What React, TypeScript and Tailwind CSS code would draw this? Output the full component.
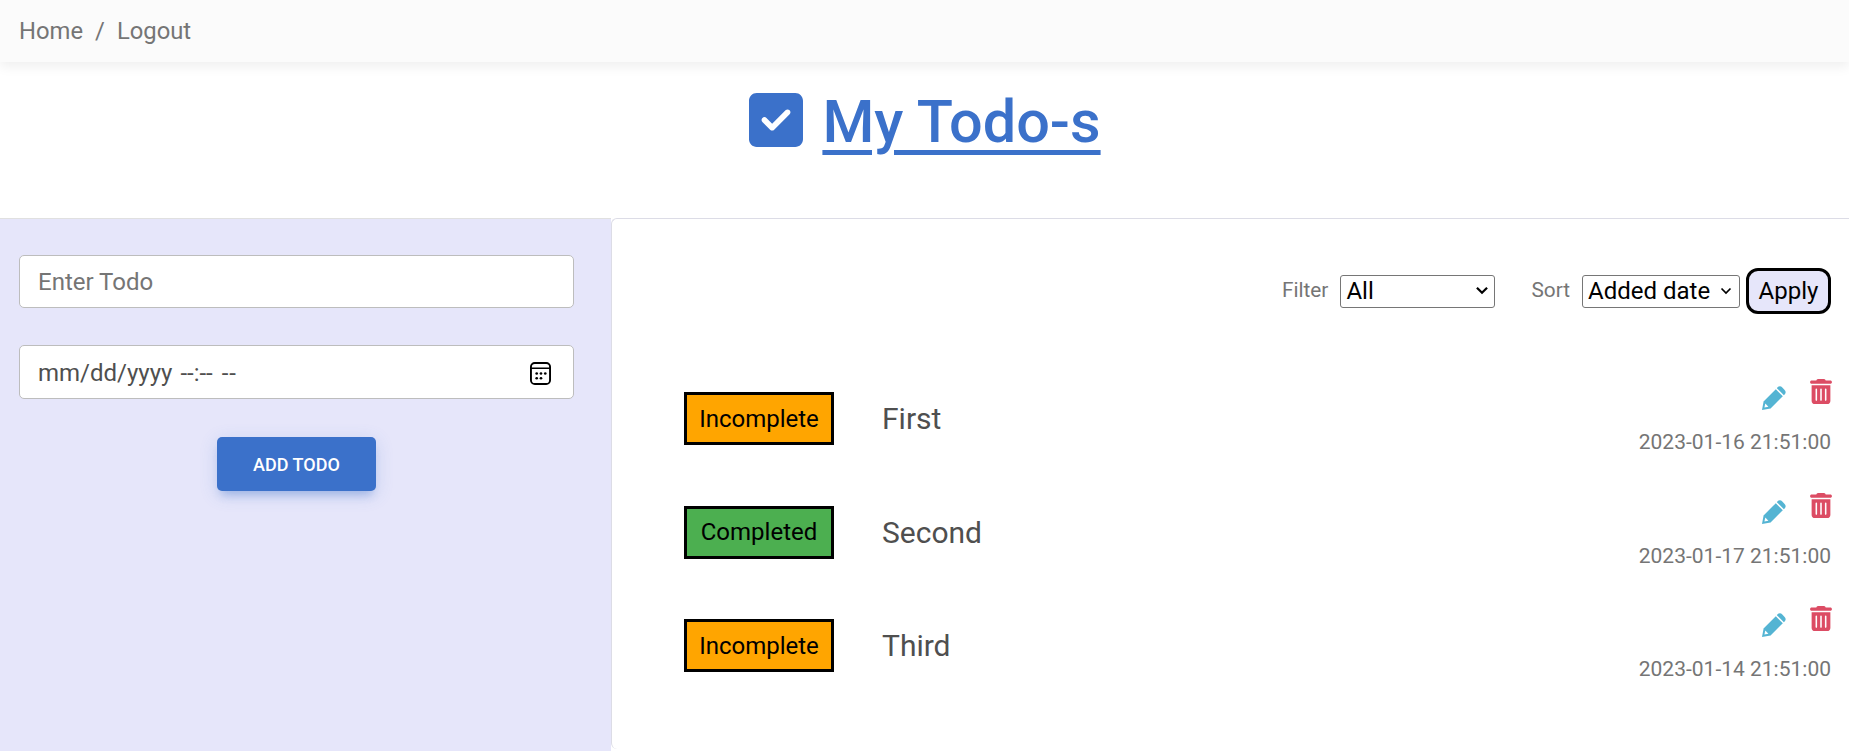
import { FaSquareCheck, FaTrashCan } from "react-icons/fa6";

const todos = [
  { status: "Incomplete", name: "First", date: "2023-01-16 21:51:00", color: "bg-[#ffa500]" },
  { status: "Completed", name: "Second", date: "2023-01-17 21:51:00", color: "bg-[#4caf50]" },
  { status: "Incomplete", name: "Third", date: "2023-01-14 21:51:00", color: "bg-[#ffa500]" },
];

function Chevron({ small }: { small?: boolean }) {
  return (
    <svg
      viewBox="0 0 12 8"
      className={
        small
          ? "pointer-events-none absolute right-[8px] top-[12px] h-[8px] w-[12px] text-black"
          : "pointer-events-none absolute right-[6px] top-[11px] h-[9px] w-[14px] text-black"
      }
    >
      <path d="M1.5 1.5 6 6l4.5-4.5" fill="none" stroke="currentColor" strokeWidth={small ? 1.7 : 2} />
    </svg>
  );
}

function Pencil() {
  return (
    <svg viewBox="0 0 24 24" className="h-[24px] w-[24px] text-[#54b4d3]" fill="currentColor">
      <path d="M1.6 15.4 13.8 3.2l7 7L8.6 22.4 0 24Z" />
      <path d="M15.3 1.6c1.7-1.7 3.5-1.7 5 0l2.1 2.1c1.7 1.6 1.7 3.3 0 5l-.5.5-7-7Z" />
      <path d="M2.4 21.6l.9-4 3.1 3.1Z" fill="#fff" />
    </svg>
  );
}

export default function App() {
  return (
    <div className="h-[751px] overflow-hidden bg-white font-['Roboto',sans-serif] text-[#4f4f4f]">
      <nav className="relative z-10 flex h-[62px] items-center bg-[#fbfbfb] px-[19px] pt-[1px] text-[23.8px] text-[#757575] shadow-[0_4px_12px_rgba(0,0,0,0.07)]">
        <span>Home</span>
        <span className="px-[12px]">/</span>
        <span>Logout</span>
      </nav>
      <header className="flex h-[156px] justify-center pt-[31px] text-[#3b71ca]">
        <div className="flex h-[54px] items-center gap-[19px] pl-[1px]">
          <FaSquareCheck className="h-[62px] w-[54px]" />
          <h1 className="mt-[4px] text-[59.4px] leading-[54px] font-medium underline decoration-[5px] underline-offset-[8px]">My Todo-s</h1>
        </div>
      </header>
      <main className="flex h-[533px]">
        <aside className="flex w-[611px] flex-col border-t border-[#e0e0e0] bg-[#e6e6fa] pl-[19px] pr-[37px] pt-[36px]">
          <input
            placeholder="Enter Todo"
            className="h-[53px] w-full rounded-[5px] border border-[#bdbdbd] bg-white px-[18px] text-[24px] text-[#4f4f4f] outline-none placeholder:text-[#757575]"
          />
          <div className="relative mt-[37px] flex h-[54px] w-full items-center rounded-[5px] border border-[#bdbdbd] bg-white px-[18px] pt-[1px] text-[24px] text-[#4f4f4f]">
            <span>mm/dd/yyyy</span>
            <span className="ml-[8px]">--:--</span>
            <span className="ml-[9px] tracking-[1px]">--</span>
            <svg viewBox="0 0 22 24" className="absolute right-[22px] top-[16px] h-[23px] w-[21px] text-black" fill="none" stroke="currentColor">
              <rect x="1" y="1" width="20" height="22" rx="4" strokeWidth="2" />
              <path d="M1 6.5h20" strokeWidth="1.6" />
              <g fill="currentColor" stroke="none">
                <circle cx="7" cy="12" r="1.4" />
                <circle cx="11.5" cy="12" r="1.4" />
                <circle cx="16" cy="12" r="1.4" />
                <circle cx="7" cy="17" r="1.4" />
                <circle cx="11.5" cy="17" r="1.4" />
              </g>
            </svg>
          </div>
          <button className="mx-auto mt-[38px] h-[54px] w-[159px] rounded-[5px] bg-[#3b71ca] text-[18px] font-medium text-white uppercase shadow-[0_8px_9px_-4px_rgba(59,113,202,0.3),0_4px_18px_0_rgba(59,113,202,0.2)]">
            Add Todo
          </button>
        </aside>
        <section className="h-[531px] flex-1 rounded-l-[6px] border-t border-l border-[#dcdce6] bg-white pr-[18px] pt-[49px]">
          <div className="flex h-[46px] items-center justify-end text-[#757575]">
            <label className="text-[20.8px]">Filter</label>
            <div className="relative ml-[12px] h-[33px] w-[155px]">
              <select className="h-full w-full appearance-none rounded-[3px] border border-[#767676] bg-white px-[5px] text-[24px] leading-[29px] text-black">
                <option>All</option>
              </select>
              <Chevron />
            </div>
            <label className="ml-[36px] text-[20.8px]">Sort</label>
            <div className="relative ml-[12px] h-[33px] w-[158px]">
              <select className="h-full w-full appearance-none rounded-[3px] border border-[#767676] bg-white px-[5px] text-[24px] leading-[29px] text-black">
                <option>Added date</option>
              </select>
              <Chevron small />
            </div>
            <button className="ml-[6px] h-[46px] w-[85px] rounded-[12px] border-[3px] border-black bg-[#e6e6fa] text-[24px] text-black">
              Apply
            </button>
          </div>
          <ul className="mt-[48px]">
            {todos.map((t) => (
              <li key={t.name} className="flex h-[113.5px] items-center pl-[72px]">
                <span className={`flex h-[53px] w-[150px] items-center justify-center border-[3px] border-black text-[24px] text-black ${t.color}`}>
                  {t.status}
                </span>
                <span className="ml-[48px] text-[30px]">{t.name}</span>
                <div className="ml-auto flex flex-col items-end">
                  <div className="-mr-[1px] flex items-end gap-[24px]">
                    <Pencil />
                    <FaTrashCan className="mb-[6px] h-[25px] w-[22px] text-[#dc4c64]" />
                  </div>
                  <span className="mt-[17px] text-[21px] text-[#757575]">{t.date}</span>
                </div>
              </li>
            ))}
          </ul>
        </section>
      </main>
    </div>
  );
}
